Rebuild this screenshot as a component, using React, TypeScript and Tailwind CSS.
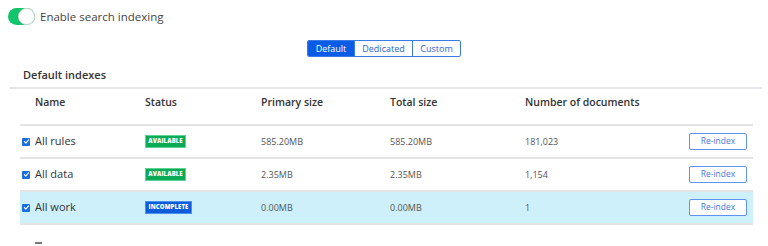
import React from 'react';

type Row = { name: string; status: 'AVAILABLE' | 'INCOMPLETE'; primary: string; total: string; docs: string; selected?: boolean };

const rows: Row[] = [
  { name: 'All rules', status: 'AVAILABLE', primary: '585.20MB', total: '585.20MB', docs: '181,023' },
  { name: 'All data', status: 'AVAILABLE', primary: '2.35MB', total: '2.35MB', docs: '1,154' },
  { name: 'All work', status: 'INCOMPLETE', primary: '0.00MB', total: '0.00MB', docs: '1', selected: true },
];

const cols = 'grid grid-cols-[125px_116px_129px_135px_164px_58px_6px]';

function Check() {
  return (
    <span className="w-[8px] h-[8px] rounded-[1px] bg-[#1a6fe0] flex items-center justify-center">
      <svg width="7" height="7" viewBox="0 0 10 10" fill="none">
        <path d="M2 5.2l2 2 4-4.4" stroke="#fff" strokeWidth="1.6" strokeLinecap="round" strokeLinejoin="round" />
      </svg>
    </span>
  );
}

function Badge({ status }: { status: Row['status'] }) {
  const available = status === 'AVAILABLE';
  return (
    <span
      className={
        'inline-flex items-center justify-center h-[13px] text-[6px] font-extrabold tracking-[0.1px] text-white border ' +
        (available ? 'w-[41px] bg-[#0aaa57] border-[#5fd393]' : 'w-[47px] bg-[#0b5ddb] border-[#4c8ef0]')
      }
    >
      {status}
    </span>
  );
}

export default function App() {
  return (
    <div className="w-[768px] h-[246px] overflow-hidden bg-white text-[#333]" style={{ fontFamily: '"Open Sans", "Noto Sans", sans-serif' }}>
      {/* Toggle */}
      <div className="flex items-center gap-[5px] pl-[8px] pt-[8px] h-[25px]">
        <span className="relative w-[27px] h-[17px] rounded-full bg-[#12c46b]">
          <span className="absolute right-0 top-0 w-[17px] h-[17px] rounded-full bg-white border border-[#d6d6d6]" />
        </span>
        <span className="text-[11.5px] text-[#444]">Enable search indexing</span>
      </div>

      {/* Segmented */}
      <div className="flex justify-center mt-[15px]">
        <div className="flex h-[17px] border border-[#3b7be8] rounded-[2px] overflow-hidden text-[9px]">
          <span className="w-[46px] flex items-center justify-center bg-[#0a5ce6] text-white">Default</span>
          <span className="w-[58px] flex items-center justify-center text-[#2a66d8] border-l border-[#3b7be8]">Dedicated</span>
          <span className="w-[48px] flex items-center justify-center text-[#2a66d8] border-l border-[#3b7be8]">Custom</span>
        </div>
      </div>

      {/* Section title */}
      <div className="pl-[23px] mt-[10px] h-[16px] flex items-center text-[11px] font-semibold text-[#333]">Default indexes</div>
      <div className="ml-[10px] mr-[6px] mt-[4px] h-[2px] bg-[#e4e4ea]" />

      {/* Table */}
      <div className="ml-[20px] w-[733px]">
        <div className={cols + ' h-[35px] pb-[7px] items-center text-[10.5px] font-semibold text-[#333]'}>
          <span className="pl-[15px]">Name</span>
          <span>Status</span>
          <span>Primary size</span>
          <span>Total size</span>
          <span>Number of documents</span>
          <span />
          <span />
        </div>
        <div className="h-[2px] bg-[#e4e4e4]" />
        {rows.map((r) => (
          <div key={r.name} className={'border-b-2 border-[#e4e4e4] ' + (r.selected ? 'bg-[#cdf0fa]' : '')}>
            <div className={cols + ' h-[31px] items-center text-[9px] text-[#555]'}>
              <span className="flex items-center gap-[5px] pl-[2px] text-[11px] font-medium text-[#333]">
                <Check />
                {r.name}
              </span>
              <span className="flex">
                <Badge status={r.status} />
              </span>
              <span>{r.primary}</span>
              <span>{r.total}</span>
              <span>{r.docs}</span>
              <span className="h-[17px] flex items-center justify-center border-[1.5px] border-[#5f93f0] rounded-[2px] text-[8.5px] text-[#4479e0] bg-white">
                Re-index
              </span>
              <span />
            </div>
          </div>
        ))}
        <div className="pl-[15px] mt-[17px]">
          <span className="block w-[7px] h-[2px] bg-[#777]" />
        </div>
      </div>
    </div>
  );
}
